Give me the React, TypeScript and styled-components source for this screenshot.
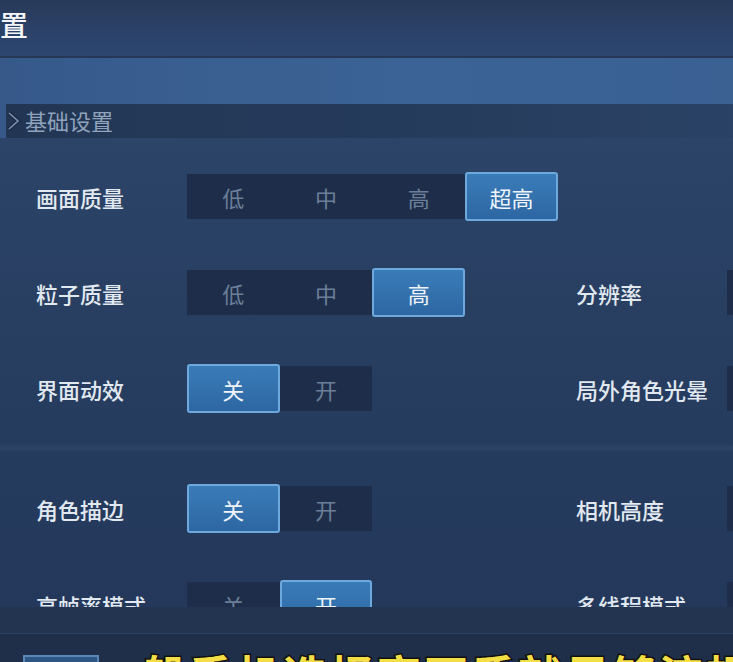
import React from "react";
import styled, { createGlobalStyle } from "styled-components";

const GlobalStyle = createGlobalStyle`
  html, body {
    margin: 0;
    padding: 0;
    width: 733px;
    height: 662px;
    overflow: hidden;
    background: #1f2f4a;
  }
  body {
    font-family: "Noto Sans CJK SC", "Noto Sans", sans-serif;
  }
`;

const Screen = styled.div`
  position: relative;
  width: 733px;
  height: 662px;
  overflow: hidden;
  display: flex;
  flex-direction: column;
`;

const Header = styled.div`
  height: 56px;
  flex: none;
  display: flex;
  align-items: center;
  overflow: hidden;
  background: linear-gradient(180deg, #283a5a 0%, #2d4772 100%);
  border-bottom: 2px solid #253957;
`;

const Title = styled.div`
  margin-top: -9px;
  font-size: 28px;
  font-weight: 500;
  color: #f4f6fa;
  white-space: nowrap;
`;

const TabStrip = styled.div`
  height: 46px;
  flex: none;
  background: linear-gradient(90deg, #36598a 0%, #3c6395 55%, #3a6192 100%);
`;

const Body = styled.div`
  height: 503px;
  flex: none;
  overflow: hidden;
  background: linear-gradient(180deg, #2c4569 0%, #283f62 40%, #23385a 100%);
  display: flex;
  flex-direction: column;
`;

const SectionBar = styled.div`
  height: 34px;
  flex: none;
  display: flex;
  align-items: center;
  background: #36598a;
`;

const SectionInner = styled.div`
  margin-left: 6px;
  flex: 1;
  height: 100%;
  display: flex;
  align-items: center;
  background: linear-gradient(90deg, #223654 0%, #263c5d 60%, #2a4265 100%);
`;

const SectionTitle = styled.span`
  font-size: 22px;
  color: #8fa3bc;
  margin-left: 1px;
  margin-top: -2px;
`;

const Rows = styled.div`
  padding-top: 36px;
  display: flex;
  flex-direction: column;
  gap: 51px;
`;

const Divider = styled.div`
  height: 8px;
  margin: -18px 0 -17px;
  background: linear-gradient(180deg, rgba(60, 90, 130, 0) 0%, rgba(60, 90, 130, 0.28) 50%, rgba(60, 90, 130, 0) 100%);
`;

const Row = styled.div`
  height: 45px;
  flex: none;
  display: flex;
  align-items: center;
`;

const Cell = styled.div<{ $width?: number }>`
  display: flex;
  align-items: center;
  width: ${(p) => (p.$width ? `${p.$width}px` : "auto")};
  flex: none;
  height: 100%;
`;

const Label = styled.div<{ $indent: number }>`
  width: 151px;
  padding-left: ${(p) => p.$indent}px;
  box-sizing: content-box;
  font-size: 22px;
  font-weight: 500;
  color: #e1e8f0;
  white-space: nowrap;
`;

const Track = styled.div`
  display: flex;
  height: 45px;
  background: #1e2e4a;
`;

const Segment = styled.div<{ $active: boolean }>`
  width: 92.7px;
  flex: none;
  display: flex;
  align-items: center;
  justify-content: center;
  box-sizing: border-box;
  font-size: 22px;
  color: ${(p) => (p.$active ? "#eef4fa" : "#6b7f99")};
  background: ${(p) =>
    p.$active ? "linear-gradient(180deg, #3a7cb8 0%, #2d67a3 100%)" : "transparent"};
  border: ${(p) => (p.$active ? "2px solid #6ea9de" : "none")};
  border-radius: ${(p) => (p.$active ? "3px" : "0")};
  margin: ${(p) => (p.$active ? "-2px 0" : "0")};
  height: ${(p) => (p.$active ? "49px" : "45px")};
`;

const Stub = styled.div`
  width: 120px;
  height: 45px;
  background: #1e2e4a;
`;

const Footer = styled.div`
  flex: 1;
  display: flex;
  flex-direction: column;
  background: #223450;
`;

const FooterUpper = styled.div`
  height: 26px;
  border-bottom: 1px solid #2b4162;
`;

const FooterLower = styled.div`
  flex: 1;
  background: #1f2f4a;
  display: flex;
  align-items: flex-end;
`;

const FooterTab = styled.div`
  margin-left: 23px;
  width: 72px;
  height: 5px;
  border: 2px solid #5a86b8;
  border-bottom: none;
  background: #2f5582;
`;

const Subtitle = styled.div`
  position: absolute;
  left: 95px;
  top: 652px;
  font-size: 44px;
  font-weight: 700;
  line-height: 1;
  letter-spacing: 3px;
  white-space: nowrap;
  color: #f3de45;
  -webkit-text-stroke: 3px #111;
  paint-order: stroke fill;
`;

const Chevron = () => (
  <svg width="18" height="34" viewBox="0 0 18 34">
    <polyline
      points="3,9 12,17 3,25"
      fill="none"
      stroke="#1a2a43"
      strokeWidth="4"
    />
    <polyline
      points="3,9 12,17 3,25"
      fill="none"
      stroke="#7e93ae"
      strokeWidth="1.6"
    />
  </svg>
);

type SegProps = {
  readonly options: string[];
  readonly selected: number;
};

const Segmented = ({ options, selected }: SegProps) => (
  <Track>
    {options.map((o, i) => (
      <Segment key={o} $active={i === selected}>
        {o}
      </Segment>
    ))}
  </Track>
);

type Setting = {
  readonly left: { label: string; options: string[]; selected: number };
  readonly right?: string;
};

const groupA: Setting[] = [
  { left: { label: "画面质量", options: ["低", "中", "高", "超高"], selected: 3 } },
  { left: { label: "粒子质量", options: ["低", "中", "高"], selected: 2 }, right: "分辨率" },
  { left: { label: "界面动效", options: ["关", "开"], selected: 0 }, right: "局外角色光晕" },
];

const groupB: Setting[] = [
  { left: { label: "角色描边", options: ["关", "开"], selected: 0 }, right: "相机高度" },
  { left: { label: "高帧率模式", options: ["关", "开"], selected: 1 }, right: "多线程模式" },
];

const SettingRow = ({ setting }: { setting: Setting }) => (
  <Row>
    <Cell $width={576}>
      <Label $indent={36}>{setting.left.label}</Label>
      <Segmented options={setting.left.options} selected={setting.left.selected} />
    </Cell>
    {setting.right && (
      <Cell>
        <Label $indent={0}>{setting.right}</Label>
        <Stub />
      </Cell>
    )}
  </Row>
);

const App = () => {
  return (
    <>
      <GlobalStyle />
      <Screen>
        <Header>
          <Title>置</Title>
        </Header>
        <TabStrip />
        <Body>
          <SectionBar>
            <SectionInner>
              <Chevron />
              <SectionTitle>基础设置</SectionTitle>
            </SectionInner>
          </SectionBar>
          <Rows>
            {groupA.map((s) => (
              <SettingRow key={s.left.label} setting={s} />
            ))}
            <Divider />
            {groupB.map((s) => (
              <SettingRow key={s.left.label} setting={s} />
            ))}
          </Rows>
        </Body>
        <Footer>
          <FooterUpper />
          <FooterLower>
            <FooterTab />
          </FooterLower>
        </Footer>
        <Subtitle>一般手机选择高画质就足够流畅运行</Subtitle>
      </Screen>
    </>
  );
};

export default App;
